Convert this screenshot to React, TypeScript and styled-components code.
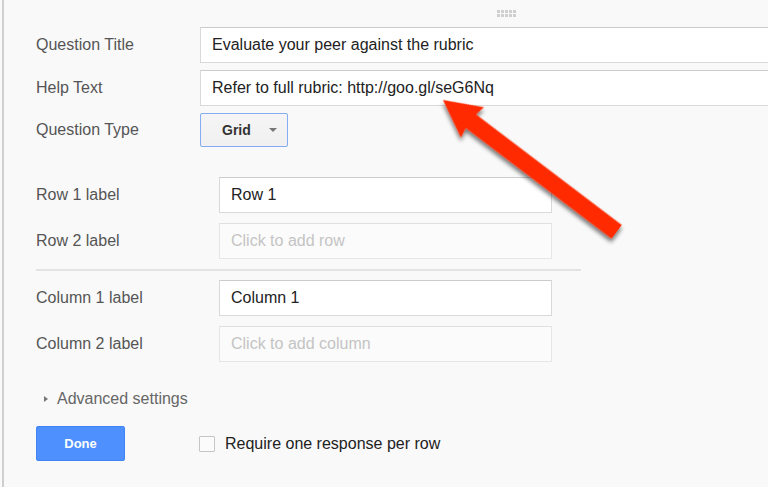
import React from 'react'
import styled, { createGlobalStyle } from 'styled-components'

const GlobalStyle = createGlobalStyle`
  body {
    margin: 0;
    background: #f9f9f9;
    font-family: "Liberation Sans", Arial, sans-serif;
  }
`

const Page = styled.div`
  position: relative;
  width: 768px;
  height: 487px;
  overflow: hidden;
  padding-left: 2px;
  box-sizing: border-box;
  background: #f9f9f9;
`

const Panel = styled.div`
  height: 100%;
  border-left: 2px solid #cfcfcf;
  box-sizing: border-box;
`

const HandleBar = styled.div`
  height: 27px;
  display: flex;
  align-items: center;
  padding-left: 493px;
`

const Dots = styled.div`
  display: grid;
  grid-template-columns: repeat(5, 3px);
  grid-auto-rows: 3px;
  gap: 1px;
  div {
    background: #cfcfcf;
  }
`

const Form = styled.div`
  padding-left: 32px;
`

const FieldGrid = styled.div<{ $labelWidth: number; $inputWidth: number; $gap: number }>`
  display: grid;
  grid-template-columns: ${p => p.$labelWidth}px ${p => p.$inputWidth}px;
  row-gap: ${p => p.$gap}px;
  align-items: center;
`

const Label = styled.div`
  font-size: 16px;
  color: #555;
`

const TextBox = styled.div<{ $empty?: boolean }>`
  height: 36px;
  box-sizing: border-box;
  padding: 0 11px;
  display: flex;
  align-items: center;
  font-size: 16px;
  background: ${p => (p.$empty ? '#fbfbfb' : '#fff')};
  color: ${p => (p.$empty ? '#c4c4c4' : '#222')};
  border: 1px solid ${p => (p.$empty ? '#e6e6e6' : '#d9d9d9')};
  border-top-color: ${p => (p.$empty ? '#e0e0e0' : '#cccccc')};
`

const SelectButton = styled.div`
  width: 88px;
  height: 34px;
  box-sizing: border-box;
  display: flex;
  align-items: center;
  justify-content: space-between;
  padding: 0 10px 0 21px;
  background: linear-gradient(#f5f5f5, #f0f0f0);
  border: 1px solid #83acf5;
  border-radius: 2px;
  font-size: 14px;
  font-weight: bold;
  color: #333;
`

const DownCaret = styled.span`
  width: 0;
  height: 0;
  border-left: 4px solid transparent;
  border-right: 4px solid transparent;
  border-top: 4px solid #777;
`

const Section = styled.div<{ $top: number }>`
  margin-top: ${p => p.$top}px;
`

const Divider = styled.div`
  width: 545px;
  height: 2px;
  background: #e3e3e3;
  margin: 10px 0 9px;
`

const Advanced = styled.div`
  margin-top: 27px;
  display: flex;
  align-items: center;
  height: 20px;
  font-size: 16px;
  color: #666;
  padding-left: 8px;
`

const RightCaret = styled.span`
  width: 0;
  height: 0;
  border-top: 3.5px solid transparent;
  border-bottom: 3.5px solid transparent;
  border-left: 4px solid #777;
  margin-right: 9px;
`

const Footer = styled.div`
  margin-top: 17px;
  display: flex;
  align-items: center;
`

const DoneButton = styled.div`
  width: 89px;
  height: 35px;
  box-sizing: border-box;
  display: flex;
  align-items: center;
  justify-content: center;
  background: #4d90fe;
  border: 1px solid #3f85f5;
  border-radius: 2px;
  color: #fff;
  font-size: 13px;
  font-weight: bold;
`

const CheckLabel = styled.label`
  margin-left: 74px;
  display: flex;
  align-items: center;
  font-size: 16px;
  color: #222;
`

const CheckBox = styled.span`
  width: 16px;
  height: 16px;
  box-sizing: border-box;
  border: 1px solid #c6c6c6;
  background: #fbfbfb;
  border-radius: 1px;
  margin-right: 10px;
`

const Overlay = styled.svg`
  position: absolute;
  left: 0;
  top: 0;
  pointer-events: none;
`

const Arrow = () => (
  <Overlay width="768" height="487" viewBox="0 0 768 487">
    <defs>
      <filter id="arrowShadow" x="-20%" y="-20%" width="140%" height="140%">
        <feDropShadow dx="2" dy="3" stdDeviation="2" floodColor="#000" floodOpacity="0.55" />
      </filter>
    </defs>
    <g transform="translate(443 100) rotate(37.2)" filter="url(#arrowShadow)">
      <polygon
        points="0,0 37,-19 35,-8.5 218,-8.5 218,8.5 35,8.5 37,19"
        fill="#ff2a00"
      />
    </g>
  </Overlay>
)

export default function App() {
  return (
    <Page>
      <GlobalStyle />
      <Panel>
        <HandleBar>
          <Dots>
            {Array.from({ length: 10 }).map((_, i) => (
              <div key={i} />
            ))}
          </Dots>
        </HandleBar>
        <Form>
          <FieldGrid $labelWidth={164} $inputWidth={620} $gap={7}>
            <Label>Question Title</Label>
            <TextBox>Evaluate your peer against the rubric</TextBox>
            <Label>Help Text</Label>
            <TextBox>Refer to full rubric: http://goo.gl/seG6Nq</TextBox>
            <Label>Question Type</Label>
            <SelectButton>
              Grid
              <DownCaret />
            </SelectButton>
          </FieldGrid>

          <Section $top={30}>
            <FieldGrid $labelWidth={183} $inputWidth={333} $gap={10}>
              <Label>Row 1 label</Label>
              <TextBox>Row 1</TextBox>
              <Label>Row 2 label</Label>
              <TextBox $empty>Click to add row</TextBox>
            </FieldGrid>
            <Divider />
            <FieldGrid $labelWidth={183} $inputWidth={333} $gap={10}>
              <Label>Column 1 label</Label>
              <TextBox>Column 1</TextBox>
              <Label>Column 2 label</Label>
              <TextBox $empty>Click to add column</TextBox>
            </FieldGrid>
          </Section>

          <Advanced>
            <RightCaret />
            Advanced settings
          </Advanced>

          <Footer>
            <DoneButton>Done</DoneButton>
            <CheckLabel>
              <CheckBox />
              Require one response per row
            </CheckLabel>
          </Footer>
        </Form>
      </Panel>
      <Arrow />
    </Page>
  )
}
